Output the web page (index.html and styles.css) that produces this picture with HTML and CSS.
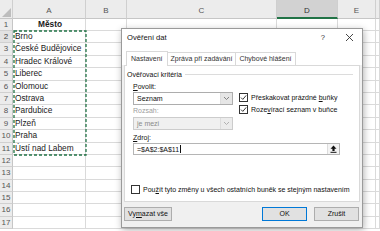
FILE: index.html
```html
<!DOCTYPE html>
<html lang="cs">
<head>
<meta charset="utf-8">
<title>Ověření dat</title>
<link rel="stylesheet" href="styles.css">
</head>
<body>
<div class="sheet">
  <div class="row hdr">
    <div class="c ch corner"><svg class="tri" width="9" height="9" viewBox="0 0 9 9"><polygon points="9,0 9,9 0,9" fill="#bdbdbd"/></svg></div>
    <div class="c ca">A</div><div class="c cb">B</div><div class="c cc">C</div><div class="c cd csel">D</div><div class="c ce">E</div><div class="c cf"></div>
  </div>
  <div class="row"><div class="c ch">1</div><div class="c ca bold">Město</div><div class="c cb"></div><div class="c cc"></div><div class="c cd"></div><div class="c ce"></div><div class="c cf"></div></div>
  <div class="row"><div class="c ch rsel">2</div><div class="c ca">Brno</div><div class="c cb"></div><div class="c cc"></div><div class="c cd"></div><div class="c ce"></div><div class="c cf"></div></div>
  <div class="row"><div class="c ch">3</div><div class="c ca">České Budějovice</div><div class="c cb"></div><div class="c cc"></div><div class="c cd"></div><div class="c ce"></div><div class="c cf"></div></div>
  <div class="row"><div class="c ch">4</div><div class="c ca">Hradec Králové</div><div class="c cb"></div><div class="c cc"></div><div class="c cd"></div><div class="c ce"></div><div class="c cf"></div></div>
  <div class="row"><div class="c ch">5</div><div class="c ca">Liberec</div><div class="c cb"></div><div class="c cc"></div><div class="c cd"></div><div class="c ce"></div><div class="c cf"></div></div>
  <div class="row"><div class="c ch">6</div><div class="c ca">Olomouc</div><div class="c cb"></div><div class="c cc"></div><div class="c cd"></div><div class="c ce"></div><div class="c cf"></div></div>
  <div class="row"><div class="c ch">7</div><div class="c ca">Ostrava</div><div class="c cb"></div><div class="c cc"></div><div class="c cd"></div><div class="c ce"></div><div class="c cf"></div></div>
  <div class="row"><div class="c ch">8</div><div class="c ca">Pardubice</div><div class="c cb"></div><div class="c cc"></div><div class="c cd"></div><div class="c ce"></div><div class="c cf"></div></div>
  <div class="row"><div class="c ch">9</div><div class="c ca">Plzeň</div><div class="c cb"></div><div class="c cc"></div><div class="c cd"></div><div class="c ce"></div><div class="c cf"></div></div>
  <div class="row"><div class="c ch">10</div><div class="c ca">Praha</div><div class="c cb"></div><div class="c cc"></div><div class="c cd"></div><div class="c ce"></div><div class="c cf"></div></div>
  <div class="row"><div class="c ch">11</div><div class="c ca">Ústí nad Labem</div><div class="c cb"></div><div class="c cc"></div><div class="c cd"></div><div class="c ce"></div><div class="c cf"></div></div>
  <div class="row"><div class="c ch">12</div><div class="c ca"></div><div class="c cb"></div><div class="c cc"></div><div class="c cd"></div><div class="c ce"></div><div class="c cf"></div></div>
  <div class="row"><div class="c ch">13</div><div class="c ca"></div><div class="c cb"></div><div class="c cc"></div><div class="c cd"></div><div class="c ce"></div><div class="c cf"></div></div>
  <div class="row"><div class="c ch">14</div><div class="c ca"></div><div class="c cb"></div><div class="c cc"></div><div class="c cd"></div><div class="c ce"></div><div class="c cf"></div></div>
  <div class="row"><div class="c ch">15</div><div class="c ca"></div><div class="c cb"></div><div class="c cc"></div><div class="c cd"></div><div class="c ce"></div><div class="c cf"></div></div>
  <div class="row"><div class="c ch">16</div><div class="c ca"></div><div class="c cb"></div><div class="c cc"></div><div class="c cd"></div><div class="c ce"></div><div class="c cf"></div></div>
  <div class="row"><div class="c ch">17</div><div class="c ca"></div><div class="c cb"></div><div class="c cc"></div><div class="c cd"></div><div class="c ce"></div><div class="c cf"></div></div>
</div>

<svg class="ants" width="74" height="126" viewBox="0 0 74 126"><rect x="1" y="1" width="72" height="124" fill="none" stroke="#217346" stroke-width="1.3" stroke-dasharray="3 2"/></svg>

<div class="dialog">
  <div class="titlebar">
    <span class="title">Ověření dat</span>
    <span class="help">?</span>
    <svg class="close" width="9" height="9" viewBox="0 0 9 9"><path d="M1 1 L8 8 M8 1 L1 8" stroke="#333" stroke-width="0.9"/></svg>
  </div>
  <div class="tabs">
    <div class="tab active">Nastavení</div>
    <div class="tab">Zpráva při zadávání</div>
    <div class="tab">Chybové hlášení</div>
  </div>
  <div class="panel">
    <div class="group"><span>Ověřovací kritéria</span><div class="gline"></div></div>
    <div class="crit">
      <div class="left">
        <div class="lbl"><u>P</u>ovolit:</div>
        <div class="select"><span class="val">Seznam</span><div class="arrow"><svg width="7" height="5" viewBox="0 0 7 5"><path d="M1 1 L3.5 3.5 L6 1" fill="none" stroke="#777" stroke-width="0.9"/></svg></div></div>
        <div class="lbl dis">Rozsah:</div>
        <div class="select disabled"><span class="val">je mezi</span><div class="arrow"><svg width="7" height="5" viewBox="0 0 7 5"><path d="M1 1 L3.5 3.5 L6 1" fill="none" stroke="#aaa" stroke-width="0.9"/></svg></div></div>
      </div>
      <div class="right">
        <div class="check"><span class="box"><svg width="7" height="7" viewBox="0 0 7 7"><path d="M1 3.6 L2.8 5.4 L6.2 1.4" fill="none" stroke="#222" stroke-width="0.9"/></svg></span><span>Přeskakovat prázdné <u>b</u>uňky</span></div>
        <div class="check"><span class="box"><svg width="7" height="7" viewBox="0 0 7 7"><path d="M1 3.6 L2.8 5.4 L6.2 1.4" fill="none" stroke="#222" stroke-width="0.9"/></svg></span><span>Roze<u>v</u>írací seznam v buňce</span></div>
      </div>
    </div>
    <div class="lbl src"><u>Z</u>droj:</div>
    <div class="input"><span class="val">=$A$2:$A$11</span><span class="caret"></span><div class="rbtn"><svg width="7" height="8" viewBox="0 0 7 8"><path d="M3.5 0.5 L6.5 3.8 L4.6 3.8 L4.6 6 L2.4 6 L2.4 3.8 L0.5 3.8 Z" fill="#111"/><rect x="0.5" y="6.8" width="6" height="1" fill="#111"/></svg></div></div>
    <div class="check apply"><span class="box"></span><span>Pou<u>ž</u>ít tyto změny u všech ostatních buněk se stejným nastavením</span></div>
  </div>
  <div class="buttons">
    <div class="btn clear">Vy<u>m</u>azat vše</div>
    <div class="spacer"></div>
    <div class="btn ok">OK</div>
    <div class="btn cancel">Zrušit</div>
  </div>
</div>
</body>
</html>
```

FILE: styles.css
```css
html, body {
  margin: 0;
  padding: 0;
}
body {
  width: 380px;
  height: 231px;
  overflow: hidden;
  position: relative;
  background: #ffffff;
  font-family: "Liberation Sans", Arial, sans-serif;
}
.sheet {
  display: flex;
  flex-direction: column;
}
.row {
  display: flex;
  height: 12.4px;
}
.row.hdr {
  height: 18.6px;
}
.c {
  box-sizing: border-box;
  border-right: 1px solid #dadada;
  border-bottom: 1px solid #dadada;
  font-size: 8.3px;
  line-height: 11.4px;
  color: #1a1a1a;
  white-space: nowrap;
  overflow: hidden;
  padding-left: 2px;
}
.ch { width: 13px; flex: none; padding-left: 0; text-align: center; background: #ececec; color: #555; border-right-color: #c6c6c6; border-bottom-color: #d0d0d0; font-size: 8px; }
.ca { width: 73px; flex: none; }
.cb { width: 41px; flex: none; }
.cc { width: 150px; flex: none; }
.cd { width: 61px; flex: none; }
.ce { width: 38px; flex: none; }
.cf { flex: 1; }
.hdr .c {
  background: #ececec;
  color: #555;
  text-align: center;
  padding-left: 0;
  line-height: 22px;
  font-size: 8px;
  border-bottom-color: #c6c6c6;
  border-right-color: #cfcfcf;
}
.hdr .csel {
  background: #d2d2d2;
  color: #333;
  border-bottom: 2px solid #217346;
}
.corner {
  position: relative;
}
.tri {
  position: absolute;
  right: 1px;
  bottom: 1px;
}
.rsel {
  background: #e2e2e2;
  color: #444;
}
.bold {
  font-weight: bold;
  text-align: center;
}
.ants {
  position: absolute;
  left: 13px;
  top: 30px;
}

/* dialog */
.dialog {
  position: absolute;
  left: 121px;
  top: 28px;
  width: 242px;
  height: 200px;
  box-sizing: border-box;
  border: 1px solid #9a9a9a;
  background: #f0f0f0;
  box-shadow: 1px 2px 7px rgba(0, 0, 0, 0.3);
  display: flex;
  flex-direction: column;
  font-size: 7px;
  color: #111;
}
.titlebar {
  height: 17px;
  flex: none;
  background: #ffffff;
  display: flex;
  align-items: center;
  padding-left: 5px;
}
.title {
  font-size: 7.6px;
  flex: 1;
}
.help {
  font-size: 7.6px;
  color: #333;
  margin-right: 20px;
}
.close {
  margin-right: 8px;
}
.tabs {
  display: flex;
  align-items: flex-end;
  height: 19px;
  flex: none;
  padding-left: 4px;
  background: #ffffff;
}
.tab {
  box-sizing: border-box;
  height: 13px;
  line-height: 12px;
  padding: 0 3px;
  border: 1px solid #d9d9d9;
  border-bottom: none;
  margin-right: -1px;
  color: #333;
  background: #ffffff;
}
.tab.active {
  height: 15px;
  line-height: 14px;
  padding: 0 4px;
  position: relative;
  z-index: 1;
  background: #ffffff;
  margin-bottom: -1px;
}
.panel {
  box-sizing: border-box;
  height: 137px;
  flex: none;
  margin: 0 2px 0 2px;
  background: #ffffff;
  border: 1px solid #d9d9d9;
  padding: 3px 6px 0 2px;
  display: flex;
  flex-direction: column;
}
.group {
  display: flex;
  align-items: center;
  height: 10px;
}
.gline {
  flex: 1;
  height: 1px;
  background: #dcdcdc;
  margin-left: 3px;
  margin-top: 1px;
}
.crit {
  display: flex;
  margin-top: 3px;
  padding-left: 6px;
}
.left {
  width: 100px;
  display: flex;
  flex-direction: column;
}
.lbl {
  height: 10px;
  line-height: 10px;
}
.lbl.dis {
  color: #9d9d9d;
  margin-top: 1px;
}
.select {
  box-sizing: border-box;
  height: 13px;
  border: 1px solid #adadad;
  background: #ffffff;
  display: flex;
  align-items: center;
}
.select .val {
  flex: 1;
  padding-left: 3px;
}
.arrow {
  width: 11px;
  height: 11px;
  background: #e6e6e6;
  border-left: 1px solid #dddddd;
  display: flex;
  align-items: center;
  justify-content: center;
}
.select.disabled {
  background: #f0f0f0;
  border-color: #cccccc;
  color: #8a8a8a;
  margin-top: 1px;
}
.select.disabled .arrow {
  background: #ececec;
}
.right {
  display: flex;
  flex-direction: column;
  margin-left: 6px;
  margin-top: 10px;
  gap: 2px;
}
.check {
  display: flex;
  align-items: center;
  height: 10px;
  white-space: nowrap;
}
.box {
  box-sizing: border-box;
  width: 9px;
  height: 9px;
  border: 1px solid #333;
  background: #ffffff;
  margin-right: 3px;
  display: flex;
  align-items: center;
  justify-content: center;
  flex: none;
}
.lbl.src {
  margin-top: 3px;
  padding-left: 6px;
}
.input {
  box-sizing: border-box;
  height: 12px;
  margin-left: 6px;
  width: 207px;
  border: 1px solid #b5b5b5;
  display: flex;
  align-items: center;
}
.input .val {
  padding-left: 3px;
}
.caret {
  width: 1px;
  height: 8px;
  background: #111;
  margin-left: 1px;
}
.rbtn {
  margin-left: auto;
  width: 11px;
  height: 10px;
  display: flex;
  align-items: center;
  justify-content: center;
  background: #f4f4f4;
  border-left: 1px solid #dddddd;
}
.check.apply {
  margin-top: 29px;
  padding-left: 4px;
}
.buttons {
  display: flex;
  margin-top: 5px;
  padding: 0 3px 0 2px;
}
.btn {
  box-sizing: border-box;
  height: 14px;
  line-height: 12px;
  border: 1px solid #adadad;
  background: #e1e1e1;
  text-align: center;
  color: #111;
}
.btn.clear { width: 48px; }
.btn.ok { width: 45px; border-color: #0078d7; margin-right: 7px; }
.btn.cancel { width: 45px; }
.spacer { flex: 1; }
```
